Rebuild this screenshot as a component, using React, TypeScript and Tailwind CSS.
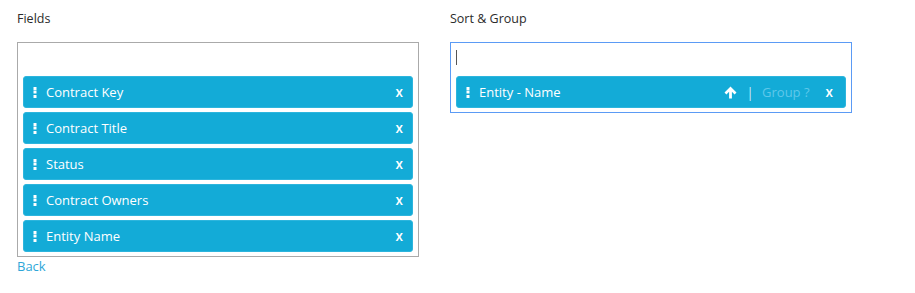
const fields = [
  "Contract Key",
  "Contract Title",
  "Status",
  "Contract Owners",
  "Entity Name",
];

function Handle() {
  return (
    <svg width="4" height="11" viewBox="0 0 4 11" className="shrink-0">
      <rect x="0.5" y="0" width="3" height="3" fill="white" />
      <rect x="0.5" y="3.5" width="3" height="3" fill="white" />
      <rect x="0.5" y="8" width="3" height="3" fill="white" />
    </svg>
  );
}

function UpArrow() {
  return (
    <svg width="13" height="13" viewBox="0 0 13 13" className="shrink-0">
      <path d="M6.5 0.5 L12.5 6.5 L10.6 8.4 L7.9 5.7 L7.9 12.5 L5.1 12.5 L5.1 5.7 L2.4 8.4 L0.5 6.5 Z" fill="white" />
    </svg>
  );
}

function FieldItem({ label }: { label: string }) {
  return (
    <div className="flex h-8 items-center rounded-[3px] border border-[#2db5dd] bg-[#13abd7] pl-[9px] pr-[9px] pt-px text-[13px] text-white">
      <Handle />
      <span className="ml-[9px] flex-1">{label}</span>
      <span className="text-[13.5px] font-semibold">x</span>
    </div>
  );
}

export default function App() {
  return (
    <div
      className="flex gap-[31px] bg-white px-[17px] pt-[9px] text-[#2b2b2b]"
      style={{ fontFamily: "'Open Sans', 'Noto Sans', sans-serif" }}
    >
      <div className="w-[402px]">
        <h3 className="h-[33px] text-[12.5px] font-medium leading-[19px]">Fields</h3>
        <div className="border border-[#aaaaaa] px-[5px] pb-[4px]">
          <div className="h-[33px]" />
          <div className="flex flex-col gap-1">
            {fields.map((f) => (
              <FieldItem key={f} label={f} />
            ))}
          </div>
        </div>
        <a href="#" className="block text-[13px] leading-[19px] text-[#2ea6d8]">
          Back
        </a>
      </div>

      <div className="w-[402px]">
        <h3 className="h-[33px] text-[12.5px] font-medium leading-[19px]">Sort &amp; Group</h3>
        <div className="border border-[#5b9bf5] px-[5px] pb-[4px]">
          <div className="flex h-[33px] items-start pt-[7px]">
            <div className="h-[15px] w-px bg-[#555]" />
          </div>
          <div className="flex h-8 items-center rounded-[3px] border border-[#2db5dd] bg-[#13abd7] pl-[9px] pr-[12px] pt-px text-[13px] text-white">
            <Handle />
            <span className="ml-[9px] flex-1">Entity - Name</span>
            <UpArrow />
            <span className="ml-[9px] text-[15px] font-light leading-none">|</span>
            <span className="ml-[8px] text-[#5fc8ea]">Group ?</span>
            <span className="ml-[16px] text-[13.5px] font-semibold">x</span>
          </div>
        </div>
      </div>
    </div>
  );
}
